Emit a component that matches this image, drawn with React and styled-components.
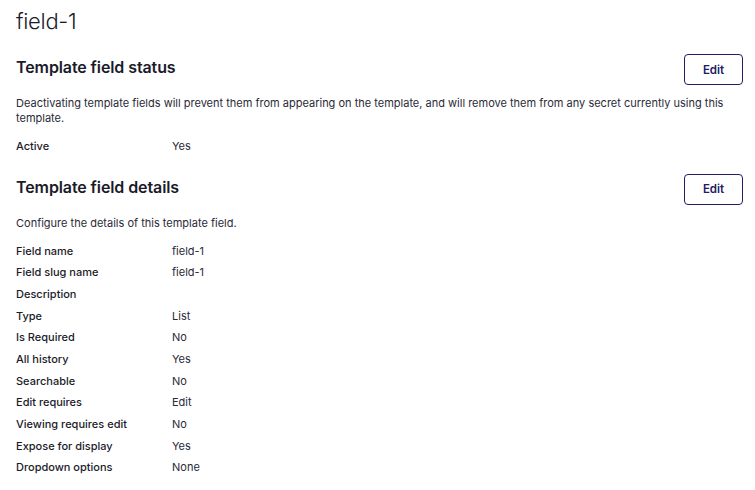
import React from "react";
import styled, { createGlobalStyle } from "styled-components";

const Global = createGlobalStyle`
  html, body { margin: 0; padding: 0; background: #fff; }
  body { font-family: Inter, "Noto Sans", sans-serif; color: #1b1b2a; }
`;

const Page = styled.div`
  padding: 6px 12px 0 16px;
  display: flex;
  flex-direction: column;
`;

const Title = styled.h1`
  margin: 0;
  font-size: 22px;
  font-weight: 300;
  line-height: 30px;
  letter-spacing: -0.3px;
`;

const Section = styled.section`
  display: flex;
  flex-direction: column;
  margin-top: ${(p) => p.$top}px;
`;

const Header = styled.div`
  display: flex;
  align-items: flex-start;
  justify-content: space-between;
`;

const Heading = styled.h2`
  margin: 0;
  font-size: 16px;
  font-weight: 600;
  line-height: 24px;
  letter-spacing: -0.1px;
`;

const EditButton = styled.button`
  width: 59px;
  height: 31px;
  border: 1.5px solid #231b63;
  border-radius: 4px;
  background: #fff;
  color: #231b63;
  font-family: inherit;
  font-size: 11.5px;
  font-weight: 600;
  cursor: pointer;
  margin-top: ${(p) => p.$top}px;
`;

const Desc = styled.p`
  margin: ${(p) => p.$top}px 0 0 0;
  font-size: 11px;
  line-height: 15px;
  color: #2a2a38;
`;

const Rows = styled.dl`
  margin: ${(p) => p.$top}px 0 0 0;
  display: grid;
  grid-template-columns: 156px 1fr;
  grid-auto-rows: 21.7px;
  align-items: center;
  font-size: 11px;
`;

const Label = styled.dt`
  font-weight: 500;
  color: #1b1b2a;
`;

const Value = styled.dd`
  margin: 0;
  color: #2a2a38;
`;

const details = [
  ["Field name", "field-1"],
  ["Field slug name", "field-1"],
  ["Description", ""],
  ["Type", "List"],
  ["Is Required", "No"],
  ["All history", "Yes"],
  ["Searchable", "No"],
  ["Edit requires", "Edit"],
  ["Viewing requires edit", "No"],
  ["Expose for display", "Yes"],
  ["Dropdown options", "None"],
];

export default function App() {
  return (
    <>
      <Global />
      <Page>
        <Title>field-1</Title>
        <Section $top={19}>
          <Header>
            <Heading>Template field status</Heading>
            <EditButton $top={-1}>Edit</EditButton>
          </Header>
          <Desc $top={11}>
            Deactivating template fields will prevent them from appearing on the template, and will remove them from any secret currently using this template.
          </Desc>
          <Rows $top={9}>
            <Label>Active</Label>
            <Value>Yes</Value>
          </Rows>
        </Section>
        <Section $top={18}>
          <Header>
            <Heading>Template field details</Heading>
            <EditButton $top={-1}>Edit</EditButton>
          </Header>
          <Desc $top={11}>Configure the details of this template field.</Desc>
          <Rows $top={9}>
            {details.map(([k, v]) => (
              <React.Fragment key={k}>
                <Label>{k}</Label>
                <Value>{v}</Value>
              </React.Fragment>
            ))}
          </Rows>
        </Section>
      </Page>
    </>
  );
}
